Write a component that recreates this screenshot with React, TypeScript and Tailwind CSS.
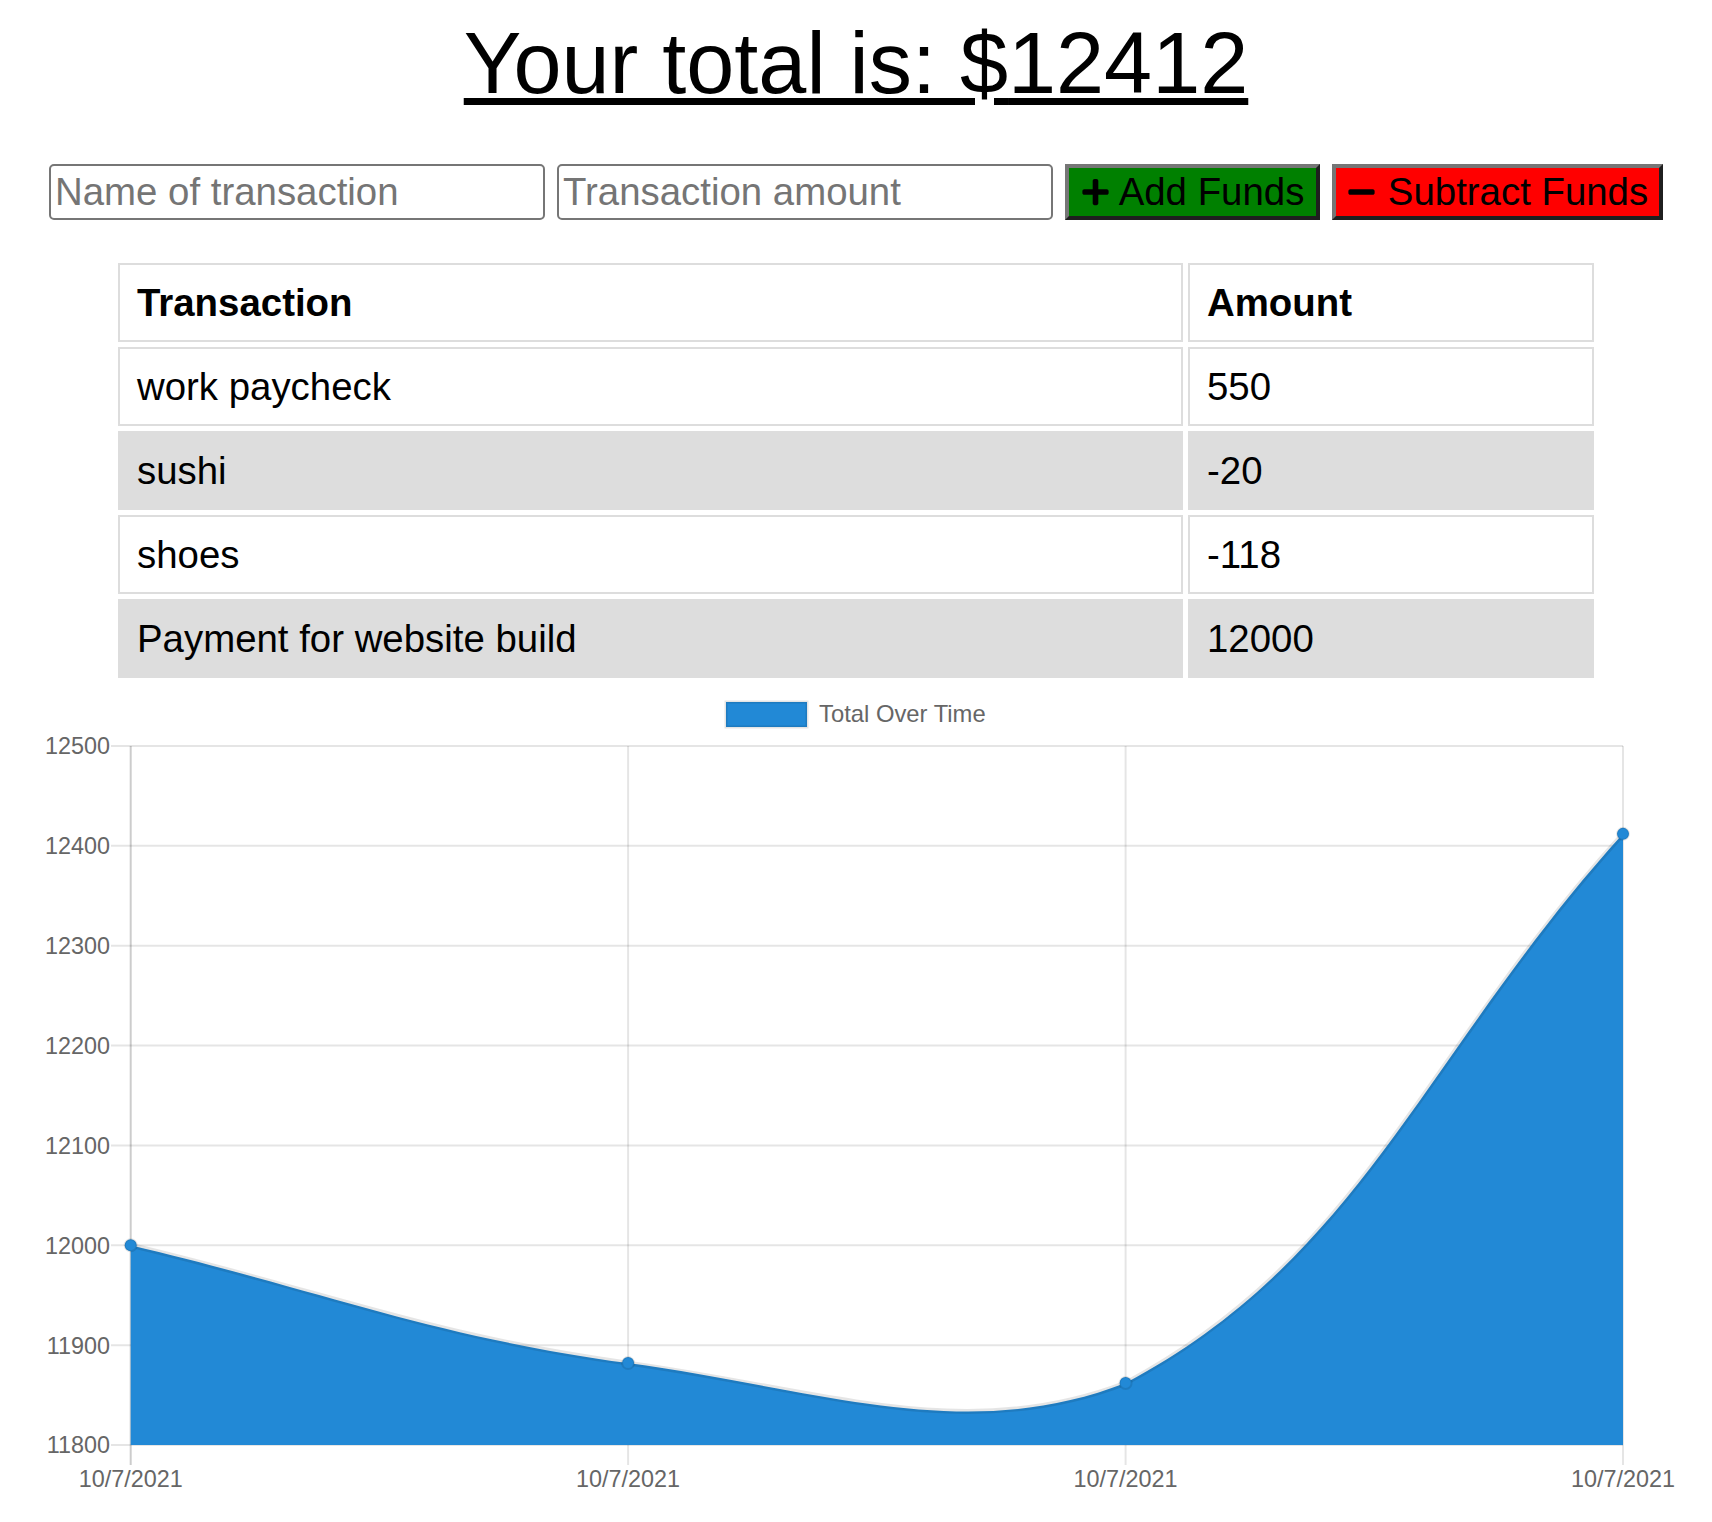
import {FaMinus, FaPlus} from 'react-icons/fa';

const transactions = [
  {name: 'work paycheck', value: 550},
  {name: 'sushi', value: -20},
  {name: 'shoes', value: -118},
  {name: 'Payment for website build', value: 12000},
];

// chart geometry, page pixels
const TOP = 745;
const BOTTOM = 1444;
const LEFT = 130.7;
const RIGHT = 1623;
const MAX = 12500;
const MIN = 11800;
const xs = [LEFT, 628.1, 1125.6, RIGHT];
const totals = [12000, 11882, 11862, 12412];
const ticks = [12500, 12400, 12300, 12200, 12100, 12000, 11900, 11800];

const yOf = (v: number) => TOP + ((MAX - v) * (BOTTOM - TOP)) / (MAX - MIN);

type Pt = {x: number; y: number};

const clamp = (p: Pt): Pt => ({
  x: Math.min(Math.max(p.x, LEFT), RIGHT),
  y: Math.min(Math.max(p.y, TOP), BOTTOM),
});

// same spline as chart.js v2 (tension 0.4)
const buildPath = (pts: Pt[]) => {
  const cps = pts.map((p, i) => {
    const prev = pts[i - 1] ?? p;
    const next = pts[i + 1] ?? p;
    const d01 = Math.hypot(p.x - prev.x, p.y - prev.y);
    const d12 = Math.hypot(next.x - p.x, next.y - p.y);
    const sum = d01 + d12;
    const fa = sum ? (0.4 * d01) / sum : 0;
    const fb = sum ? (0.4 * d12) / sum : 0;
    return {
      prev: clamp({x: p.x - fa * (next.x - prev.x), y: p.y - fa * (next.y - prev.y)}),
      next: clamp({x: p.x + fb * (next.x - prev.x), y: p.y + fb * (next.y - prev.y)}),
    };
  });
  let d = `M${pts[0].x},${pts[0].y}`;
  for (let i = 1; i < pts.length; i++) {
    const a = cps[i - 1].next;
    const b = cps[i].prev;
    d += ` C${a.x},${a.y} ${b.x},${b.y} ${pts[i].x},${pts[i].y}`;
  }
  return d;
};

const TotalChart = () => {
  const pts = xs.map((x, i) => ({x, y: yOf(totals[i])}));
  const line = buildPath(pts);
  const area = `${line} L${RIGHT},${BOTTOM} L${LEFT},${BOTTOM} Z`;

  return (
    <svg
      width={1712}
      height={845}
      viewBox="0 677 1712 845"
      className="block"
      style={{fontFamily: '"Liberation Sans", Arial, sans-serif'}}
    >
      {/* legend */}
      <rect x={726} y={701} width={81} height={25} fill="#2289d6" stroke="rgba(0,0,0,0.1)" strokeWidth={3} />
      <text x={819} y={721.4} fontSize={23.8} fill="#666">
        Total Over Time
      </text>

      {/* grid */}
      {ticks.map(t => (
        <g key={t}>
          <line x1={111} x2={RIGHT} y1={yOf(t)} y2={yOf(t)} stroke="rgba(0,0,0,0.1)" strokeWidth={2} />
          <text x={110} y={yOf(t) + 8.4} fontSize={23.4} fill="#666" textAnchor="end">
            {t}
          </text>
        </g>
      ))}
      {xs.map((x, i) => (
        <g key={i}>
          <line
            x1={x}
            x2={x}
            y1={TOP}
            y2={BOTTOM + 20}
            stroke={i === 0 ? 'rgba(0,0,0,0.2)' : 'rgba(0,0,0,0.1)'}
            strokeWidth={2}
          />
          <text x={x} y={1486} fontSize={23.4} fill="#666" textAnchor="middle">
            10/7/2021
          </text>
        </g>
      ))}

      {/* data */}
      <path d={area} fill="#2289d6" />
      <path d={line} fill="none" stroke="rgba(0,0,0,0.1)" strokeWidth={5} />
      {pts.map((p, i) => (
        <circle key={i} cx={p.x} cy={p.y} r={6} fill="#2289d6" stroke="rgba(0,0,0,0.1)" strokeWidth={2} />
      ))}
    </svg>
  );
};

const cellBase = 'flex h-[79px] items-center border-2 border-[#dddddd] pl-[17px]';

export default function App() {
  const total = transactions.reduce((sum, t) => sum + t.value, 0);

  return (
    <div className="min-h-[1522px] w-[1712px] bg-white font-['Liberation_Sans',Arial,sans-serif] text-black">
      <h1 className="pt-[14px] text-center text-[86.4px] font-normal leading-[1.149] underline decoration-[7px] underline-offset-[5px] [text-decoration-skip-ink:auto]">
        Your total is: ${total}
      </h1>

      <form className="mt-[51px] flex justify-center gap-[12px]" onSubmit={e => e.preventDefault()}>
        <input
          type="text"
          placeholder="Name of transaction"
          className="box-border h-[56px] w-[496px] rounded-[5px] border-2 border-[#767676] px-[4px] text-[38.4px] placeholder:text-[#757575]"
        />
        <input
          type="number"
          placeholder="Transaction amount"
          className="box-border h-[56px] w-[496px] rounded-[5px] border-2 border-[#767676] px-[4px] text-[38.4px] placeholder:text-[#757575]"
        />
        <button
          type="button"
          className="box-border flex h-[56px] w-[255px] items-center justify-center gap-[9px] border-[4px] border-t-[#767676] border-r-[#1f1f1f] border-b-[#1f1f1f] border-l-[#767676] bg-[#008000] text-[38.4px]"
        >
          <FaPlus className="h-[30px] w-[29px]" />
          Add Funds
        </button>
        <button
          type="button"
          className="box-border flex h-[56px] w-[331px] items-center justify-center gap-[12px] border-[4px] border-t-[#767676] border-r-[#1f1f1f] border-b-[#1f1f1f] border-l-[#767676] bg-[#ff0000] text-[38.4px]"
        >
          <FaMinus className="h-[30px] w-[29px]" />
          Subtract Funds
        </button>
      </form>

      <div className="mx-auto mt-[43px] grid w-[1476px] grid-cols-[1065px_406px] gap-x-[5px] gap-y-[5px] text-[38.4px]">
        <div className={`${cellBase} bg-white font-bold`}>Transaction</div>
        <div className={`${cellBase} bg-white font-bold`}>Amount</div>
        {transactions.map((t, i) => {
          const bg = i % 2 === 1 ? 'bg-[#dddddd]' : 'bg-white';
          return (
            <div key={t.name} className="contents">
              <div className={`${cellBase} ${bg}`}>{t.name}</div>
              <div className={`${cellBase} ${bg}`}>{t.value}</div>
            </div>
          );
        })}
      </div>

      <TotalChart />
    </div>
  );
}
